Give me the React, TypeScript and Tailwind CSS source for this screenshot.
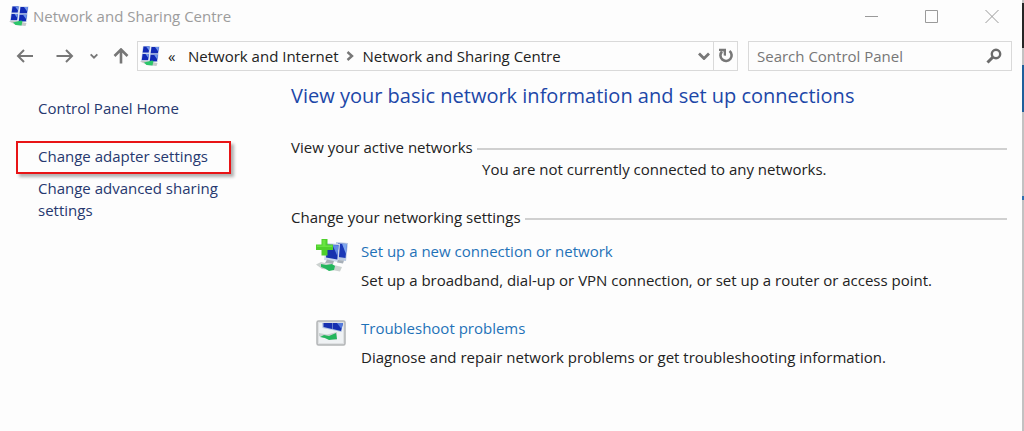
import type { ReactNode } from "react";

type Task = {
  title: string;
  description: string;
  href: string;
  icon: ReactNode;
};

function NetworkIcon() {
  return (
    <svg viewBox="0 0 20 20" className="h-5 w-5 shrink-0" aria-hidden="true">
      <path d="M3 0h7.500l-1 7.500H2zM11 .5h8.500l-1 7.500H10z" fill="#c3d0ea" />
      <path d="M2 7.500h7.500l-1 7.500H1.200zM10 8h8.500l-1 8H9z" fill="#b9c8e6" />
      <path d="M3.500.5h6l-.8 6H2.700zM11.500 1h7.300l-.9 6.200h-7.200z" fill="#1029b5" />
      <path d="M2.600 8h6.300l-.8 6H1.800zM10.600 8.800h7.200l-.9 6.400H9.800z" fill="#1029b5" />
      <path
        d="M6 .5h3.500l-.5 4zM15 1h3.800l-.6 4.500zM5.500 8h3.400l-.6 4zM14 8.800h3.800l-.6 4.500z"
        fill="#6f95ea"
      />
      <path d="M0 15.500l4-1 13.500 2.500-1 3-9-1z" fill="#c4c9c8" />
      <path d="M4 16.500l8-2 1.500.5-1 4.500-6-.5z" fill="#2bc56a" />
    </svg>
  );
}

function NewConnectionIcon() {
  return (
    <svg viewBox="0 0 32 34" className="h-[34px] w-8" aria-hidden="true">
      <path d="M20 3l12 1-2 18-9-1z" fill="#b9c9e2" />
      <path d="M22 4.500l9 .5-1.500 14-7-1z" fill="#1b39b8" />
      <path d="M26 4.700l5 .3-1 10z" fill="#7fa7ee" />
      <path d="M10 4l14 1-1.500 18L8 21z" fill="#cdd9ec" />
      <path d="M11 5.500l11.500.5-1.200 14.500L10 18.500z" fill="#1733ae" />
      <path d="M16.500 6l6 .2-1 11z" fill="#638be5" />
      <path d="M11 20.500l7 1.500-1 3-8-1zM22 21l6 .5-1 3-6-1z" fill="#a8b0b8" />
      <path d="M0 25.500l5-2.500 21 5-2 4.500-8-1.500-10-1z" fill="#ccd2d0" />
      <path d="M5 25l5 1 6-1 3 2-1 4-5 1-4-2.500-4-1.500z" fill="#24b65c" />
      <path d="M5.500 0h6v5.500H17v5.500h-5.500v5.500h-6V11H0V5.500h5.500z" fill="#4fd02c" />
      <path d="M6.500 1h3v5.500H16v1.500H1V6.500h5.500z" fill="#68e441" />
    </svg>
  );
}

function TroubleshootIcon() {
  return (
    <svg viewBox="0 0 30 26" className="h-[26px] w-[30px]" aria-hidden="true">
      <rect x="1" y="1" width="28" height="24" rx="1.500" fill="#dfe1e3" stroke="#b3b5b7" strokeWidth="1.500" />
      <path d="M3 3h24v20H3z" fill="#eff2f4" />
      <path d="M6 3h21l-1.500 9-9-2-10-2z" fill="#b3c4e2" />
      <path d="M7.500 3h8.500v6l-8.500-2zM16.500 3H27l-2 8-8.500-2z" fill="#1730b0" />
      <path d="M21 3h6l-1.500 6z" fill="#557bdc" />
      <path d="M3 13l8 1.500 10-2.500v8l-10-1-8-3z" fill="#c9d0d0" />
      <path d="M8 15l5 1 7-3 1 6-8 1-4-2-5-1z" fill="#24b65c" />
    </svg>
  );
}

function ChevronDown({ className }: { className: string }) {
  return (
    <svg viewBox="0 0 12 8" className={className} aria-hidden="true">
      <path d="M1 1.500l5 5 5-5" fill="none" stroke="currentColor" strokeWidth="2.800" />
    </svg>
  );
}

const tasks: Task[] = [
  {
    title: "Set up a new connection or network",
    description:
      "Set up a broadband, dial-up or VPN connection, or set up a router or access point.",
    href: "#new-connection",
    icon: <NewConnectionIcon />,
  },
  {
    title: "Troubleshoot problems",
    description:
      "Diagnose and repair network problems or get troubleshooting information.",
    href: "#troubleshoot",
    icon: <TroubleshootIcon />,
  },
];

function TitleBar() {
  return (
    <header className="flex h-8 items-center pl-[9px]">
      <NetworkIcon />
      <h1 className="ml-1 flex-1 text-[#9c9c9c]">Network and Sharing Centre</h1>
      <div className="flex text-[#9a9a9a]">
        <button aria-label="Minimise" className="flex h-[30px] w-[60px] items-center justify-center">
          <svg viewBox="0 0 14 14" className="h-3.5 w-3.5">
            <path d="M0 7.500h13" stroke="currentColor" />
          </svg>
        </button>
        <button aria-label="Maximise" className="flex h-[30px] w-[60px] items-center justify-center">
          <svg viewBox="0 0 14 14" className="h-3.5 w-3.5">
            <path d="M.5 1.500h12v12H.5z" fill="none" stroke="currentColor" />
          </svg>
        </button>
        <button aria-label="Close" className="flex h-[30px] w-[60px] items-center justify-center">
          <svg viewBox="0 0 14 14" className="h-3.5 w-3.5">
            <path d="M.5 1l13 13M13.500 1l-13 13" stroke="currentColor" />
          </svg>
        </button>
      </div>
    </header>
  );
}

function Toolbar() {
  return (
    <div className="flex items-center pt-[9px] pr-[10px] pl-4 text-[#777777]">
      {/* History buttons */}
      <nav aria-label="History" className="flex w-[121px] shrink-0 items-center">
        <button aria-label="Back">
          <svg viewBox="0 0 18 14" className="h-3.5 w-[18px]">
            <path d="M17 7H2M8 1L2 7l6 6" fill="none" stroke="currentColor" strokeWidth="2" />
          </svg>
        </button>
        <button aria-label="Forward" className="ml-[22px]">
          <svg viewBox="0 0 18 14" className="h-3.5 w-[18px]">
            <path d="M.5 7H16M10 1l6 6-6 6" fill="none" stroke="currentColor" strokeWidth="2" />
          </svg>
        </button>
        <button aria-label="Recent locations" className="ml-4">
          <ChevronDown className="h-1.5 w-2" />
        </button>
        <button aria-label="Up" className="ml-[15px]">
          <svg viewBox="0 0 16 16" className="h-4 w-4">
            <path d="M8 15.500V2M1.500 8L8 1.500 14.500 8" fill="none" stroke="currentColor" strokeWidth="2.600" />
          </svg>
        </button>
      </nav>

      {/* Address bar */}
      <div className="flex h-[30px] flex-1 items-center border border-[#d9d9d9]">
        <div className="flex flex-1 items-center pl-0.5 text-[#222222]">
          <NetworkIcon />
          <span className="ml-2 w-5">«</span>
          <a href="#network-and-internet">Network and Internet</a>
          <svg viewBox="0 0 8 10" className="mx-2 h-2.5 w-2 text-[#777777]" aria-hidden="true">
            <path d="M1.500 1l4.500 4-4.500 4" fill="none" stroke="currentColor" strokeWidth="2.400" />
          </svg>
          <a href="#sharing-centre">Network and Sharing Centre</a>
        </div>
        <button aria-label="Previous locations" className="px-[3px]">
          <ChevronDown className="h-2 w-3" />
        </button>
        <button
          aria-label="Refresh"
          className="flex h-full w-6 items-center justify-center border-l border-[#d9d9d9]"
        >
          <svg viewBox="0 0 16 16" className="h-4 w-4">
            <path d="M11.500 3a5.600 5.600 0 1 1-7.500.5" fill="none" stroke="currentColor" strokeWidth="2.600" />
            <path d="M1 .8h7v7L5.700 7.500V3.500L1 3z" fill="currentColor" />
          </svg>
        </button>
      </div>

      {/* Search */}
      <label className="ml-[10px] flex h-[30px] w-[264px] items-center border border-[#d9d9d9] pr-[9px] pl-2">
        <input
          type="search"
          aria-label="Search Control Panel"
          placeholder="Search Control Panel"
          className="min-w-0 flex-1 bg-transparent outline-none placeholder:text-[#777777]"
        />
        <svg viewBox="0 0 16 16" className="h-4 w-4 text-[#6b6b6b]" aria-hidden="true">
          <circle cx="10" cy="6" r="4.200" fill="none" stroke="currentColor" strokeWidth="2.400" />
          <path d="M7 9l-5.500 5.500" stroke="currentColor" strokeWidth="3" />
        </svg>
      </label>
    </div>
  );
}

function Sidebar() {
  return (
    <aside className="flex w-[291px] shrink-0 flex-col items-start pt-[26px] pl-4 text-[#26386f]">
      <a href="#home" className="ml-[22px]">
        Control Panel Home
      </a>
      <a
        href="#adapter"
        className="mt-[22px] h-[33px] w-[215px] border-2 border-[#e81416] pt-[2px] pl-5 shadow-[3px_3px_3px_rgba(0,0,0,0.3)]"
      >
        Change adapter settings
      </a>
      <a href="#advanced" className="mt-[3px] ml-[22px] w-[190px]">
        Change advanced sharing settings
      </a>
    </aside>
  );
}

function SectionHeading({ children }: { children: ReactNode }) {
  return (
    <div className="flex items-center gap-1">
      <h3>{children}</h3>
      <div className="mt-1 h-0.5 flex-1 bg-[#d0d0d0]" />
    </div>
  );
}

export default function App() {
  return (
    <div className="flex min-h-screen bg-[#fdfdfd] font-['Open_Sans',sans-serif] text-[15px] leading-[22px] text-[#222222]">
      <div className="min-w-0 flex-1">
        <TitleBar />
        <Toolbar />
        <div className="flex">
          <Sidebar />
          <main className="min-w-0 flex-1 pt-[9px] pr-[15px]">
            <h2 className="text-xl leading-8 text-[#1c47a8]">
              View your basic network information and set up connections
            </h2>

            <section className="mt-6">
              <SectionHeading>View your active networks</SectionHeading>
              <p className="pl-[191px]">You are not currently connected to any networks.</p>
            </section>

            <section className="mt-[26px]">
              <SectionHeading>Change your networking settings</SectionHeading>
              <ul className="mt-3 flex flex-col gap-[26px] pl-[25px]">
                {tasks.map((task) => (
                  <li key={task.title} className="flex">
                    <div className="-mt-1 flex h-10 w-[45px] shrink-0 items-center">{task.icon}</div>
                    <div>
                      <a href={task.href} className="text-[#1f72b8]">
                        {task.title}
                      </a>
                      <p className="mt-[7px]">{task.description}</p>
                    </div>
                  </li>
                ))}
              </ul>
            </section>
          </main>
        </div>
      </div>

      {/* Sliver of the windows behind */}
      <div className="flex w-0.5 flex-col bg-[#c2c2c2]">
        <div className="mt-[3px] h-[45px] bg-[#262626]" />
        <div className="mt-[17px] h-[47px] bg-[#1f5f9b]" />
        <div className="mt-[84px] h-1 bg-[#2f6fae]" />
      </div>
    </div>
  );
}
